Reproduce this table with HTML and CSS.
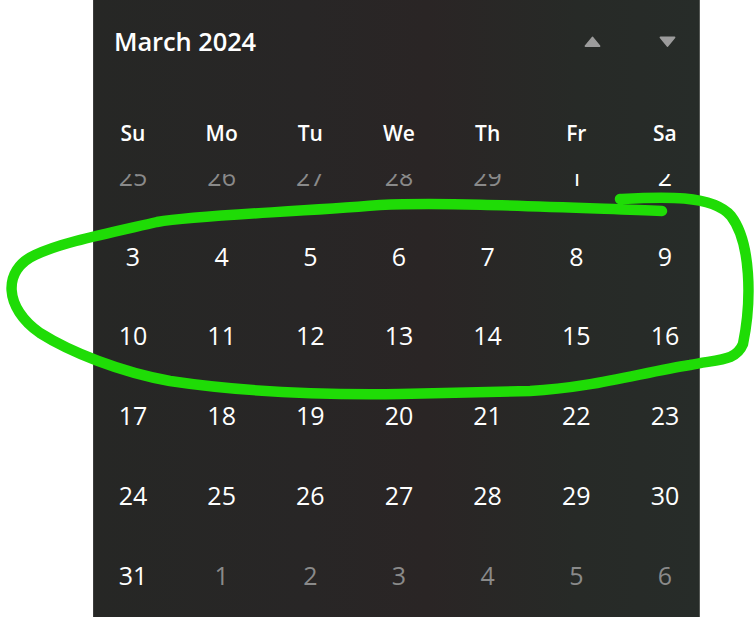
FILE: index.html
```html
<!DOCTYPE html>
<html lang="en">
<head>
<meta charset="utf-8">
<title>March 2024</title>
<link rel="stylesheet" href="styles.css">
</head>
<body>
<div class="page">
  <section class="calendar">
    <header class="cal-header">
      <h1 class="cal-title">March 2024</h1>
      <div class="cal-nav">
        <button class="nav-btn" aria-label="Previous month">
          <svg width="17" height="12" viewBox="0 0 17 12"><path d="M8.5 1.5 L15.5 10 L1.5 10 Z" fill="#9c9c9c" stroke="#9c9c9c" stroke-width="1.8" stroke-linejoin="round"/></svg>
        </button>
        <button class="nav-btn" aria-label="Next month">
          <svg width="17" height="12" viewBox="0 0 17 12"><path d="M1.5 1.5 L15.5 1.5 L8.5 10 Z" fill="#9c9c9c" stroke="#9c9c9c" stroke-width="1.8" stroke-linejoin="round"/></svg>
        </button>
      </div>
    </header>
    <div class="weekdays">
      <span>Su</span><span>Mo</span><span>Tu</span><span>We</span><span>Th</span><span>Fr</span><span>Sa</span>
    </div>
    <div class="days-viewport">
      <div class="days">
        <span class="day other">25</span><span class="day other">26</span><span class="day other">27</span><span class="day other">28</span><span class="day other">29</span><span class="day">1</span><span class="day">2</span>
        <span class="day">3</span><span class="day">4</span><span class="day">5</span><span class="day">6</span><span class="day">7</span><span class="day">8</span><span class="day">9</span>
        <span class="day">10</span><span class="day">11</span><span class="day">12</span><span class="day">13</span><span class="day">14</span><span class="day">15</span><span class="day">16</span>
        <span class="day">17</span><span class="day">18</span><span class="day">19</span><span class="day">20</span><span class="day">21</span><span class="day">22</span><span class="day">23</span>
        <span class="day">24</span><span class="day">25</span><span class="day">26</span><span class="day">27</span><span class="day">28</span><span class="day">29</span><span class="day">30</span>
        <span class="day">31</span><span class="day other">1</span><span class="day other">2</span><span class="day other">3</span><span class="day other">4</span><span class="day other">5</span><span class="day other">6</span>
      </div>
    </div>
  </section>
  <svg class="scribble" width="755" height="617" viewBox="0 0 755 617" aria-hidden="true">
    <path d="M620 199 C 660 197, 712 194, 731 216 C 751 242, 752 300, 743 344 C 736 361, 720 359, 690 365 C 640 373, 590 388, 530 391 L 400 394 C 330 395, 250 393, 170 381 C 120 372, 70 352, 40 333 C 4 308, 2 270, 35 255 C 60 243, 100 235, 157 222 C 200 215, 280 213, 380 205 C 450 202, 550 207, 662 211" fill="none" stroke="#1fdc06" stroke-width="10.5" stroke-linecap="round" stroke-linejoin="round"/>
  </svg>
</div>
</body>
</html>
```
FILE: styles.css
```css
html, body {
  margin: 0;
  padding: 0;
  background: #ffffff;
}

.page {
  position: relative;
  width: 755px;
  height: 617px;
  overflow: hidden;
}

.calendar {
  box-sizing: border-box;
  margin-left: 93px;
  width: 607px;
  height: 617px;
  overflow: hidden;
  border-left: 1px solid #3c3c3c;
  border-right: 1px solid #555855;
  background: linear-gradient(to right, #262725 0%, #282626 35%, #2a2525 55%, #272a27 80%, #272c29 100%);
  font-family: "Open Sans", "Noto Sans", sans-serif;
  color: #ffffff;
}

.cal-header {
  box-sizing: border-box;
  height: 88px;
  display: flex;
  align-items: center;
  justify-content: space-between;
  padding: 0 12px 5px 20px;
}

.cal-title {
  margin: 0;
  font-size: 25.5px;
  font-weight: 600;
  line-height: 1;
  letter-spacing: -0.1px;
}

.cal-nav {
  display: flex;
  gap: 35px;
}

.nav-btn {
  width: 40px;
  height: 30px;
  padding: 0;
  border: 0;
  background: transparent;
  display: flex;
  align-items: center;
  justify-content: center;
}

.weekdays {
  display: grid;
  grid-template-columns: repeat(7, 88.67px);
  margin-left: -5.33px;
  height: 86px;
  padding-top: 3px;
  box-sizing: border-box;
  align-items: center;
  font-size: 21px;
  font-weight: 600;
}

.weekdays span {
  text-align: center;
}

.days-viewport {
  height: 443px;
  overflow: hidden;
}

.days {
  display: grid;
  grid-template-columns: repeat(7, 88.67px);
  grid-auto-rows: 79.8px;
  margin-left: -5.33px;
  margin-top: -38px;
  align-items: center;
  font-size: 25px;
  font-weight: 400;
}

.day {
  text-align: center;
}

.day.other {
  color: #8a8a8a;
}

.scribble {
  position: absolute;
  left: 0;
  top: 0;
  pointer-events: none;
}
```
